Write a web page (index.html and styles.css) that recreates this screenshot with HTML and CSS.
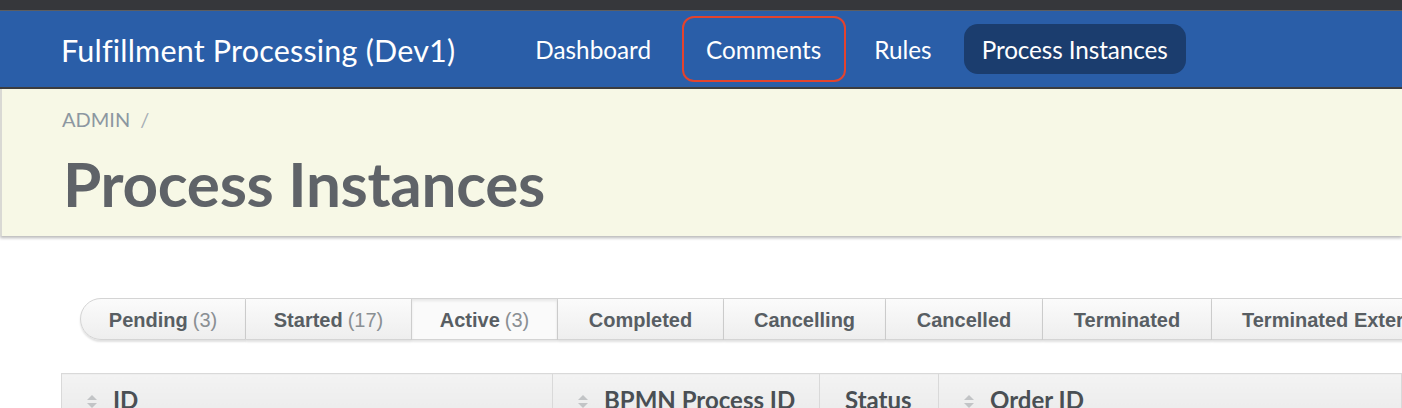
FILE: index.html
```html
<!DOCTYPE html>
<html lang="en">
<head>
<meta charset="utf-8">
<title>Process Instances</title>
<link rel="stylesheet" href="styles.css">
</head>
<body>
<div class="topbar"></div>
<nav class="navbar">
  <span class="brand">Fulfillment Processing (Dev1)</span>
  <ul class="nav-links">
    <li><a class="nav-link">Dashboard</a></li>
    <li><a class="nav-link highlighted">Comments</a></li>
    <li><a class="nav-link">Rules</a></li>
    <li><a class="nav-link active">Process Instances</a></li>
  </ul>
</nav>
<header class="page-header">
  <div class="breadcrumb">ADMIN <span class="sep">/</span></div>
  <h1 class="title">Process Instances</h1>
</header>
<main class="content">
  <div class="tabs">
    <div class="tab first">Pending <span class="count">(3)</span></div>
    <div class="tab">Started <span class="count">(17)</span></div>
    <div class="tab selected">Active <span class="count">(3)</span></div>
    <div class="tab">Completed</div>
    <div class="tab">Cancelling</div>
    <div class="tab">Cancelled</div>
    <div class="tab">Terminated</div>
    <div class="tab">Terminated Externally</div>
  </div>
  <table class="grid">
    <thead>
      <tr>
        <th class="col-id"><span class="sort"></span>ID</th>
        <th class="col-bpmn"><span class="sort"></span>BPMN Process ID</th>
        <th class="col-status">Status</th>
        <th class="col-order"><span class="sort"></span>Order ID</th>
      </tr>
    </thead>
  </table>
</main>
</body>
</html>
```
FILE: styles.css
```css
html, body {
  margin: 0;
  padding: 0;
  background: #ffffff;
  overflow: hidden;
  width: 1402px;
  height: 408px;
}
body {
  font-family: Lato, "Noto Sans", sans-serif;
}
.topbar {
  height: 10px;
  background: #36373b;
  border-bottom: 1px solid #5c5d60;
}
.navbar {
  height: 76px;
  background: #2a5ea8;
  border-bottom: 2px solid #3c3d40;
  display: flex;
  align-items: center;
  padding-left: 61px;
  color: #ffffff;
}
.brand {
  font-size: 30.5px;
  letter-spacing: 0.2px;
  margin-right: 60px;
  padding-top: 2px;
}
.nav-links {
  list-style: none;
  margin: 0;
  padding: 0;
  display: flex;
  align-items: center;
  gap: 15px;
}
.nav-link {
  display: flex;
  align-items: center;
  height: 50px;
  padding: 1px 20px 0;
  box-sizing: border-box;
  font-size: 24.3px;
  color: #ffffff;
  border-radius: 14px;
  position: relative;
}
.nav-links li:nth-child(3) .nav-link {
  margin-left: -2px;
}
.nav-link.active {
  background: #1b3d6e;
  margin-left: -3px;
  padding: 1px 18px 0;
  letter-spacing: -0.1px;
}
.nav-link.highlighted::after {
  content: "";
  position: absolute;
  top: -8px;
  bottom: -8px;
  left: -4px;
  right: -5px;
  border: 2.5px solid #e4432d;
  border-radius: 12px;
}
.page-header {
  background: #f7f8e6;
  height: 147px;
  box-sizing: border-box;
  padding: 18px 0 0 62px;
  box-shadow: 0 2px 3px rgba(0, 0, 0, 0.28);
  border-left: 2px solid #d9d9d4;
  position: relative;
}
.breadcrumb {
  font-size: 20px;
  color: #8c97a1;
  line-height: 24px;
  margin-left: -2px;
}
.breadcrumb .sep {
  margin-left: 5px;
  color: #a6aeb5;
}
.title {
  margin: 17px 0 0 -1px;
  font-size: 62px;
  line-height: 70px;
  font-weight: 700;
  color: #5f6368;
  letter-spacing: -0.3px;
}
.content {
  padding-top: 62px;
}
.tabs {
  display: flex;
  margin-left: 80px;
  height: 42px;
  white-space: nowrap;
}
.tab {
  display: flex;
  align-items: center;
  justify-content: center;
  box-sizing: border-box;
  height: 42px;
  padding: 2px 30px 0;
  font-family: "Liberation Sans", Arial, sans-serif;
  font-weight: 700;
  font-size: 20px;
  color: #585e63;
  background: linear-gradient(#fbfbfb, #eeeeee);
  border: 1px solid #d4d4d4;
  border-left: none;
  box-shadow: 0 2px 2px rgba(0, 0, 0, 0.12);
  flex-shrink: 0;
}
.tab.first {
  border-left: 1px solid #d4d4d4;
  border-radius: 21px 0 0 21px;
  width: 166px;
}
.tab:nth-child(2) { width: 166px; }
.tab.selected {
  width: 146px;
  background: #fafafa;
  box-shadow: inset 0 2px 3px rgba(0, 0, 0, 0.08), 0 2px 2px rgba(0, 0, 0, 0.1);
}
.tab:nth-child(4) { width: 166px; }
.tab:nth-child(5) { width: 162px; }
.tab:nth-child(6) { width: 157px; }
.tab:nth-child(7) { width: 169px; }
.tab .count {
  font-weight: 400;
  color: #8a8f93;
  margin-left: 5px;
}
.grid {
  margin: 33px 0 0 61px;
  border-collapse: collapse;
  table-layout: fixed;
  width: 1341px;
}
.grid th {
  height: 52px;
  padding: 13px 0 0 24px;
  text-align: left;
  vertical-align: top;
  box-sizing: border-box;
  font-family: Lato, "Noto Sans", sans-serif;
  font-weight: 700;
  font-size: 24px;
  line-height: 26px;
  color: #4a4f54;
  background: linear-gradient(#f3f3f3, #e9e9e9);
  border: 1px solid #d9d9d9;
  border-bottom: none;
  white-space: nowrap;
}
.col-id { width: 491px; }
.col-bpmn { width: 267px; }
.col-status { width: 119px; }
.grid th.col-status { padding-left: 25px; }
.sort {
  display: inline-block;
  width: 11px;
  height: 14px;
  margin-right: 16px;
  vertical-align: 0;
  position: relative;
}
.sort::before, .sort::after {
  content: "";
  position: absolute;
  left: 1px;
  border-left: 5px solid transparent;
  border-right: 5px solid transparent;
}
.sort::before {
  top: 0;
  border-bottom: 5px solid #c2c4c6;
}
.sort::after {
  top: 8px;
  border-top: 5px solid #c2c4c6;
}
```
